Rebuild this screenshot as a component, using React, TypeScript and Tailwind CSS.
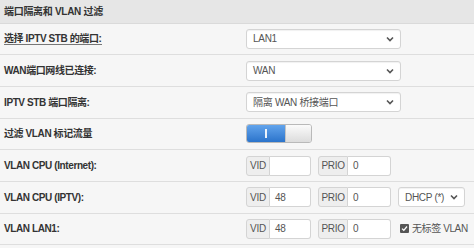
import React from "react";

const font = {
  fontFamily: '"Liberation Sans", Arial, "Noto Sans CJK SC", sans-serif',
};

const Chevron = () => (
  <svg width="8" height="6" viewBox="0 0 8 6" className="shrink-0">
    <path d="M1 1.5 L4 4.5 L7 1.5" fill="none" stroke="#555" strokeWidth="1.6" />
  </svg>
);

const Select: React.FC<{ value: string; className?: string }> = ({ value, className }) => (
  <div
    className={`flex items-center justify-between h-[20px] pl-[6px] pr-[6px] bg-white border border-[#d4d4d4] rounded-[3px] text-[10px] text-[#555] tracking-[-0.3px] shadow-[inset_0_1px_1px_rgba(0,0,0,0.06)] ${className ?? ""}`}
  >
    <span>{value}</span>
    <Chevron />
  </div>
);

const Group: React.FC<{ addon: string; value: string; addonW: string; inputW: string }> = ({
  addon,
  value,
  addonW,
  inputW,
}) => (
  <div className="flex h-[20px] text-[10px] text-[#555] tracking-[-0.3px]">
    <div
      className={`${addonW} flex items-center justify-center bg-[#eee] border border-[#d4d4d4] rounded-l-[3px]`}
    >
      {addon}
    </div>
    <div
      className={`${inputW} flex items-center pl-[5px] bg-white border border-l-0 border-[#d4d4d4] rounded-r-[3px]`}
    >
      {value}
    </div>
  </div>
);

const Row: React.FC<{ label: React.ReactNode; children?: React.ReactNode }> = ({ label, children }) => (
  <div className="grid grid-cols-[246px_1fr] items-center h-[31.7px] border-b border-[#dedede]">
    <div className="pl-[4px] text-[10px] font-bold text-[#333] tracking-[-0.4px]">{label}</div>
    <div className="flex items-center">{children}</div>
  </div>
);

const Toggle = () => (
  <div className="flex w-[66px] h-[19px] rounded-[3px] border border-[#b9b9b9] overflow-hidden">
    <div className="w-[38px] flex items-center justify-center bg-gradient-to-b from-[#62a4ec] to-[#2b74cb]">
      <div className="w-[2px] h-[9px] bg-white/90" />
    </div>
    <div className="flex-1 bg-gradient-to-b from-[#fbfbfb] to-[#dcdcdc] border-l border-[#c4c4c4]" />
  </div>
);

export default function App() {
  return (
    <div className="w-[474px] h-[248px] overflow-hidden bg-[#f6f6f6]" style={font}>
      <div className="h-[23.5px] flex items-center pl-[4px] bg-[#e6e6e6] border-b border-[#dadada] text-[10px] font-bold text-[#333] tracking-[-0.3px]">
        端口隔离和 VLAN 过滤
      </div>
      <Row label={<span className="border-b border-[#777]">选择 IPTV STB 的端口:</span>}>
        <Select value="LAN1" className="w-[155px]" />
      </Row>
      <Row label="WAN端口网线已连接:">
        <Select value="WAN" className="w-[155px]" />
      </Row>
      <Row label="IPTV STB 端口隔离:">
        <Select value="隔离 WAN 桥接端口" className="w-[155px]" />
      </Row>
      <Row label="过滤 VLAN 标记流量">
        <Toggle />
      </Row>
      <Row label="VLAN CPU (Internet):">
        <div className="flex gap-[7px]">
          <Group addon="VID" value="" addonW="w-[24px]" inputW="w-[41px]" />
          <Group addon="PRIO" value="0" addonW="w-[30px]" inputW="w-[43px]" />
        </div>
      </Row>
      <Row label="VLAN CPU (IPTV):">
        <div className="flex items-center gap-[7px]">
          <Group addon="VID" value="48" addonW="w-[24px]" inputW="w-[41px]" />
          <Group addon="PRIO" value="0" addonW="w-[30px]" inputW="w-[43px]" />
          <Select value="DHCP (*)" className="w-[67px] pl-[6px]" />
        </div>
      </Row>
      <Row label="VLAN LAN1:">
        <div className="flex items-center gap-[7px]">
          <Group addon="VID" value="48" addonW="w-[24px]" inputW="w-[41px]" />
          <Group addon="PRIO" value="0" addonW="w-[30px]" inputW="w-[43px]" />
          <label className="flex items-center gap-[3px] ml-[2px] text-[10px] text-[#555] tracking-[-0.4px]">
            <span className="w-[9px] h-[9px] rounded-[1px] bg-[#555] flex items-center justify-center">
              <svg width="7" height="7" viewBox="0 0 7 7">
                <path d="M1 3.6 L2.8 5.3 L6 1.5" fill="none" stroke="#fff" strokeWidth="1.3" />
              </svg>
            </span>
            无标签 VLAN
          </label>
        </div>
      </Row>
    </div>
  );
}
